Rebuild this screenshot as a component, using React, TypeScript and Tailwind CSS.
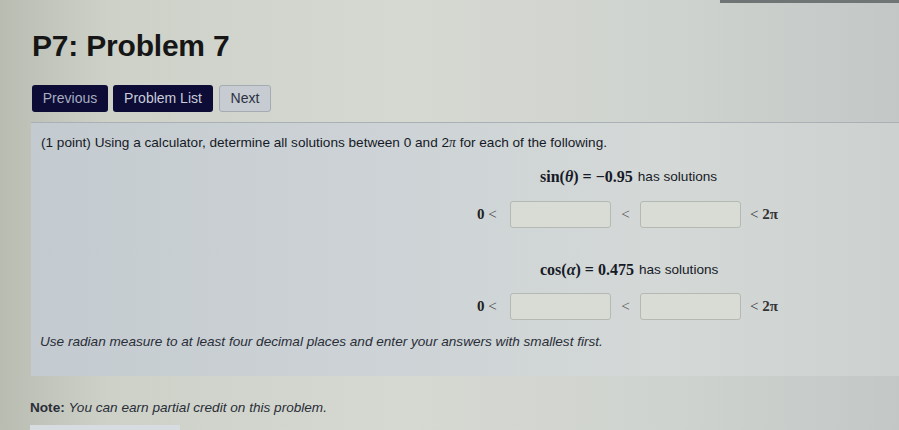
import React from "react";

const sans = { fontFamily: '"Liberation Sans", Arial, sans-serif' };

function Box() {
  return (
    <div className="w-[101px] h-[27px] rounded-[3px] border border-[#b4b9b4] bg-[#d9dcd5]" />
  );
}

function Row() {
  return (
    <div className="flex items-center ml-[446px] h-[28px]" style={{ fontFamily: '"Liberation Serif", serif' }}>
      <span className="text-[15px] text-[#222] w-[33px] font-bold">0 <span className="font-normal text-[#444]">&lt;</span></span>
      <Box />
      <span className="text-[15px] text-[#555] w-[29px] text-center">&lt;</span>
      <Box />
      <span className="text-[15px] text-[#333] ml-[9px]">&lt; <b>2π</b></span>
    </div>
  );
}

export default function App() {
  return (
    <div
      className="w-[899px] h-[430px] overflow-hidden relative bg-[linear-gradient(90deg,#b9bcb1_0%,#cdd1c8_12%,#d6d9d2_45%,#cfd3cf_75%,#c3c7c6_100%)]"
      style={sans}
    >
      <div className="absolute top-0 left-[720px] right-0 h-[3px] bg-[#6f7474]" />
      <div className="pl-[32px] pt-[28px]">
        <h1 className="text-[30px] leading-[36px] font-bold text-[#161616] tracking-[-0.2px]">P7: Problem 7</h1>
        <div className="flex gap-[5px] mt-[21px] text-[14px]">
          <div className="w-[76px] h-[27px] rounded-[3px] bg-[#0c0c36] text-[#a8adc0] flex items-center justify-center">Previous</div>
          <div className="w-[100px] h-[27px] rounded-[3px] bg-[#0c0c36] text-[#c9cdd9] flex items-center justify-center">Problem List</div>
          <div className="w-[52px] h-[27px] rounded-[3px] bg-[#c6ccd2] border border-[#a4abb2] text-[#2c3242] flex items-center justify-center ml-[1px]">Next</div>
        </div>
      </div>
      <div className="ml-[31px] mt-[10px] w-[900px] h-[254px] border-t border-[#aab1b5] bg-[linear-gradient(90deg,#c4cbd0_0%,#cdd3d6_40%,#d4d8d7_70%,#ccd1d0_100%)]">
        <div className="pl-[10px] pt-[12px] text-[13.6px] leading-[16px] text-[#161a26]">
          (1 point) Using a calculator, determine all solutions between 0 and 2<span style={{ fontFamily: '"Liberation Serif", serif' }} className="italic">π</span> for each of the following.
        </div>
        <div className="ml-[509px] mt-[16px] h-[20px] flex items-center text-[#161a26]">
          <span className="text-[16px] font-bold" style={{ fontFamily: '"Liberation Serif", serif' }}>sin(<i>θ</i>) = −0.95</span>
          <span className="text-[13.6px] ml-[5px]">has solutions</span>
        </div>
        <div className="mt-[13px]"><Row /></div>
        <div className="ml-[509px] mt-[32px] h-[20px] flex items-center text-[#161a26]">
          <span className="text-[16px] font-bold" style={{ fontFamily: '"Liberation Serif", serif' }}>cos(<i>α</i>) = 0.475</span>
          <span className="text-[13.6px] ml-[5px]">has solutions</span>
        </div>
        <div className="mt-[12px]"><Row /></div>
        <div className="pl-[9px] mt-[14px] text-[13.6px] leading-[16px] italic text-[#2a2e38]">
          Use radian measure to at least four decimal places and enter your answers with smallest first.
        </div>
      </div>
      <div className="pl-[30px] mt-[24px] text-[13.6px] leading-[16px] text-[#2a2e38]">
        <b>Note:</b> <i>You can earn partial credit on this problem.</i>
      </div>
      <div className="absolute left-[30px] top-[425px] w-[150px] h-[10px] bg-[#d6dcdf]" />
    </div>
  );
}
